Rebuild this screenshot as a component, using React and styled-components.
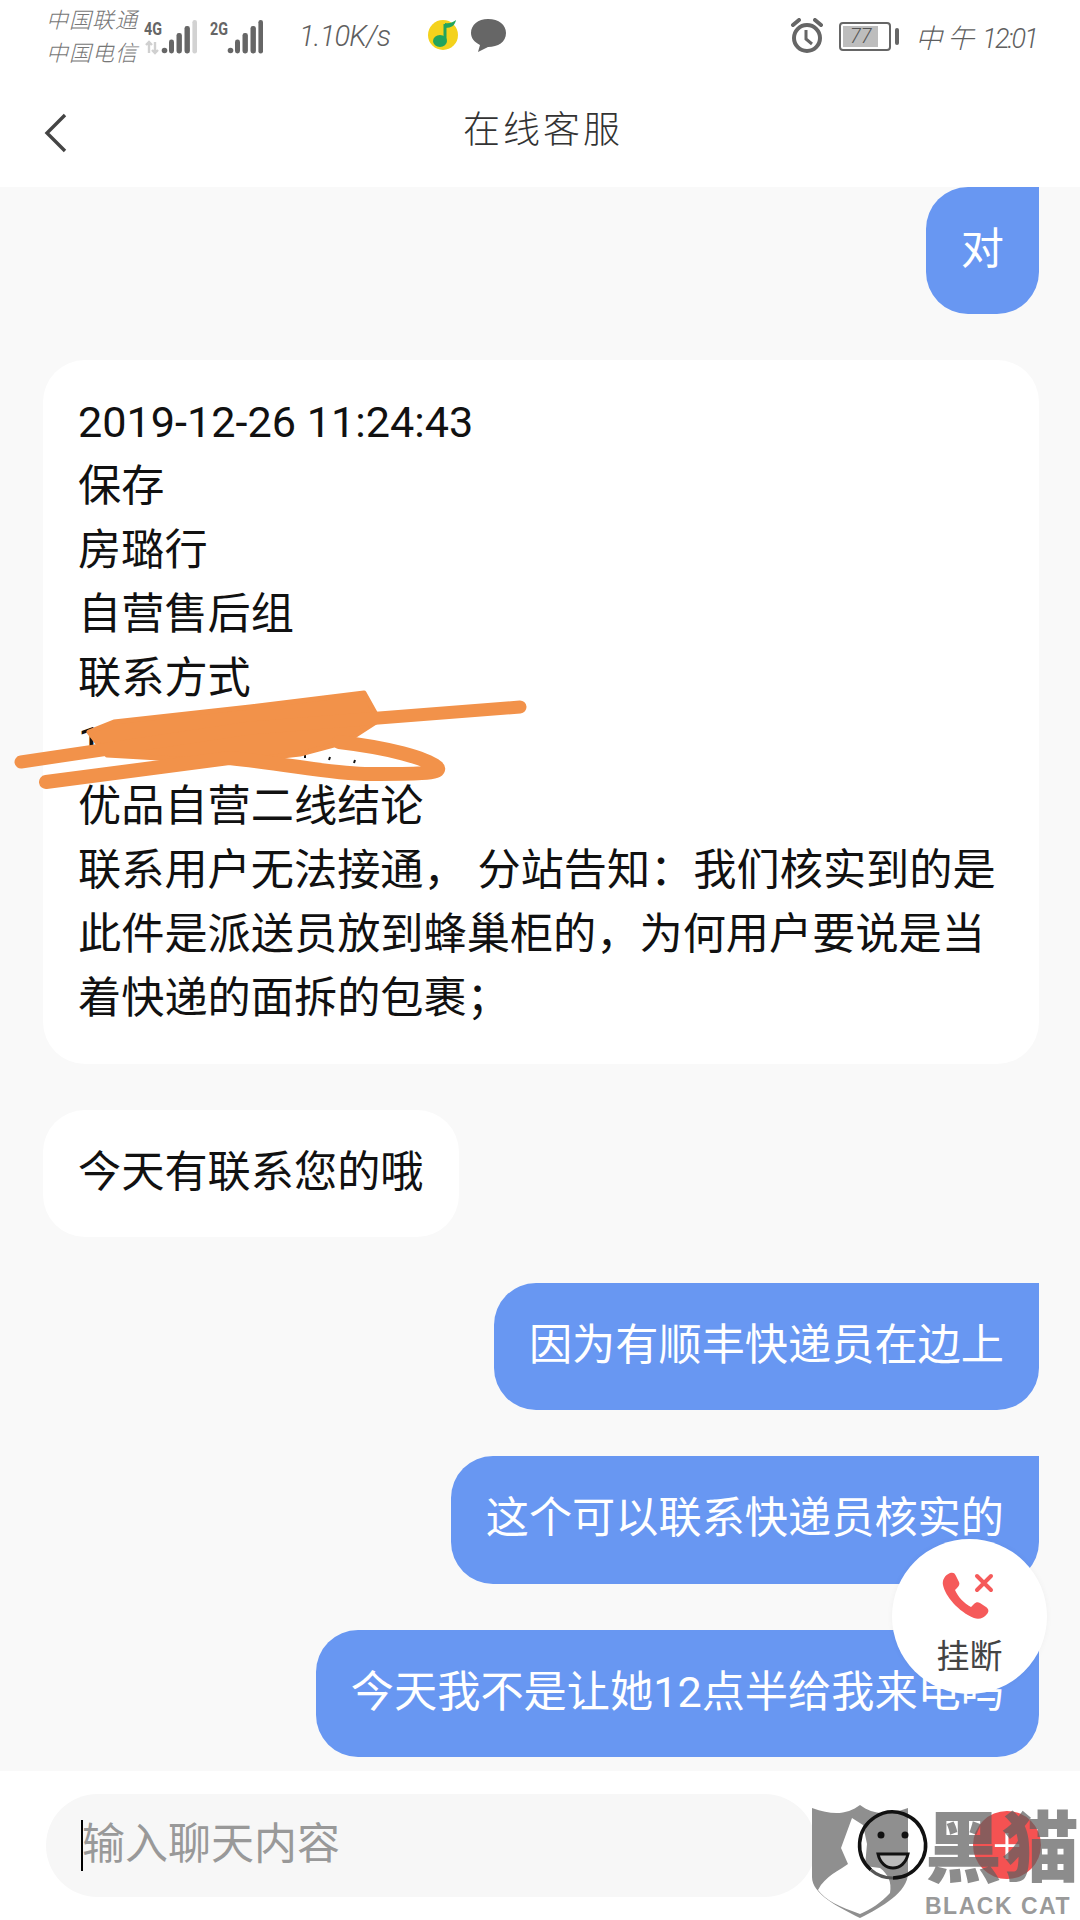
import React from 'react';
import styled, { createGlobalStyle } from 'styled-components';

const Global = createGlobalStyle`
  html, body { margin: 0; padding: 0; background: #fff; }
  * { box-sizing: border-box; }
`;

const Page = styled.div`
  position: relative;
  width: 1080px;
  height: 1920px;
  display: flex;
  flex-direction: column;
  overflow: hidden;
  background: #fff;
  font-family: Roboto, "Noto Sans CJK SC", sans-serif;
`;

const StatusBar = styled.div`
  height: 75px;
  display: flex;
  align-items: center;
  padding: 0 43px 3px 46px;
  color: #5f5f5f;
`;

const Carriers = styled.div`
  width: 98px;
  margin-top: 3px;
  display: flex;
  flex-direction: column;
  gap: 11px;
  font-size: 22px;
  line-height: 22px;
  font-weight: 300;
  font-style: italic;
  letter-spacing: 1px;
  color: #777;
  white-space: nowrap;
`;

const SignalSvg = styled.svg`
  flex: none;
  margin-right: ${p => p.$gap}px;
`;

const Speed = styled.span`
  width: 89px;
  margin-left: 36px;
  font-size: 29px;
  font-weight: 300;
  font-style: italic;
  letter-spacing: -0.8px;
  white-space: nowrap;
`;

const NotifyIcons = styled.svg`
  margin-left: 40px;
`;

const StatusRight = styled.div`
  margin-left: auto;
  display: flex;
  align-items: center;
`;

const BatteryBody = styled.div`
  width: 52px;
  height: 29px;
  margin-left: 15px;
  padding: 2px 11px 2px 2px;
  border: 2px solid #666;
  border-radius: 4px;
`;

const BatteryFill = styled.div`
  height: 100%;
  background: #bdbdbd;
  color: #555;
  font-size: 20px;
  line-height: 21px;
  font-style: italic;
  font-weight: 300;
  text-align: center;
`;

const BatteryCap = styled.div`
  width: 4px;
  height: 17px;
  margin-left: 4px;
  border-radius: 2px;
  background: #666;
`;

const Clock = styled.span`
  margin-left: 16px;
  font-size: 27px;
  font-weight: 300;
  font-style: italic;
  letter-spacing: 5px;
  white-space: nowrap;
`;

const ClockDigits = styled.span`
  margin-left: 3px;
  font-size: 27px;
  letter-spacing: -1.8px;
`;

const Header = styled.div`
  position: relative;
  height: 112px;
  display: flex;
  align-items: center;
  justify-content: center;
`;

const BackButton = styled.svg`
  position: absolute;
  left: 44px;
  top: 37px;
`;

const Title = styled.h1`
  margin: 0 0 0 6px;
  font-size: 37px;
  line-height: 40px;
  font-weight: 300;
  letter-spacing: 3px;
  color: #333;
`;

const Chat = styled.div`
  flex: 1;
  display: flex;
  flex-direction: column;
  align-items: flex-start;
  gap: 46px;
  padding: 0 41px 0 43px;
  background: #f9f9f9;
  overflow: hidden;
`;

const Bubble = styled.div`
  position: relative;
  flex: none;
  padding: 31px 35px 32.33px 35px;
  font-size: 43.2px;
  line-height: 64px;
  white-space: pre-wrap;
  border-radius: ${p => (p.$mine ? '42px 0 42px 42px' : '42px')};
  align-self: ${p => (p.$mine ? 'flex-end' : 'flex-start')};
  color: ${p => (p.$mine ? '#fff' : '#111')};
  background: ${p => (p.$mine ? '#6897f2' : '#fff')};
  width: ${p => (p.$wide ? '100%' : 'auto')};
`;

const Scribble = styled.svg`
  position: absolute;
  left: -43px;
  top: 320px;
`;

const Footer = styled.div`
  height: 149px;
  flex: none;
  padding: 23px 0 0 46px;
  background: #fff;
`;

const InputBox = styled.div`
  width: 770px;
  height: 103px;
  display: flex;
  align-items: center;
  padding-left: 35px;
  border-radius: 52px;
  background: #f7f7f7;
`;

const Caret = styled.div`
  width: 2px;
  height: 51px;
  background: #000;
`;

const Placeholder = styled.span`
  margin: 0 0 4px -1px;
  font-size: 43px;
  line-height: 50px;
  color: #999;
`;

const HangUp = styled.div`
  position: absolute;
  left: 892px;
  top: 1539px;
  width: 155px;
  height: 155px;
  display: flex;
  flex-direction: column;
  align-items: center;
  padding-top: 32px;
  border-radius: 50%;
  background: #fff;
  box-shadow: 0 0 6px rgba(0, 0, 0, 0.04);
`;

const HangUpSvg = styled.svg`
  flex: none;
  margin-left: -4px;
`;

const HangUpLabel = styled.span`
  margin-top: 18px;
  font-size: 33px;
  line-height: 36px;
  color: #444;
`;

const PlusButton = styled.div`
  position: absolute;
  left: 973px;
  top: 1811px;
  width: 68px;
  height: 68px;
  display: flex;
  align-items: center;
  justify-content: center;
  border-radius: 50%;
  background: #f55252;
  color: #fff;
  font-size: 50px;
  font-weight: 300;
`;

const Watermark = styled.div`
  position: absolute;
  left: 810px;
  top: 1804px;
  width: 270px;
  height: 116px;
`;

const CatName = styled.div`
  position: absolute;
  left: 115px;
  top: -6px;
  font-size: 77px;
  line-height: 90px;
  font-weight: 900;
  white-space: nowrap;
  color: rgba(95, 95, 95, 0.72);
  font-family: "Noto Sans CJK SC", sans-serif;
`;

const CatLatin = styled.div`
  position: absolute;
  left: 115px;
  top: 90px;
  font-size: 23px;
  line-height: 24px;
  font-weight: 900;
  letter-spacing: 1.5px;
  white-space: nowrap;
  color: #9a9a9a;
  font-family: "Liberation Sans", sans-serif;
`;

const SignalIcon = ({ label, last, arrows, gap }) => (
  <SignalSvg width="53" height="40" viewBox="0 0 53 40" $gap={gap}>
    <text x="0" y="18.5" fontSize="19" fontWeight="700" fontFamily="Roboto" fill="#666" textLength="18" lengthAdjust="spacingAndGlyphs">{label}</text>
    {arrows && <path d="M5 37V26M2 29l3-3 3 3M11 26v11M8 34l3 3 3-3" fill="none" stroke="#d0d0d0" strokeWidth="2.4" />}
    <circle cx="20.5" cy="34.5" r="2.8" fill="#666" />
    <rect x="25" y="23.5" width="5" height="14" rx="2.4" fill="#666" />
    <rect x="32.5" y="17" width="5.4" height="20.5" rx="2.4" fill="#666" />
    <rect x="40.5" y="10" width="5.4" height="27.5" rx="2.4" fill="#666" />
    <rect x="48.4" y="4" width="4.6" height="33.5" rx="2.2" fill={last} />
  </SignalSvg>
);

const HangUpIcon = () => (
  <HangUpSvg width="54" height="50" viewBox="0 0 54 50">
    <path d="M9 2c3-1 5 0 6 3l3 6c1 2 0 4-2 6l-2 2c3 7 9 13 16 17l3-3c2-2 4-2 6-1l6 4c3 2 3 5 1 7-3 4-8 6-13 4C18 41 4 25 2 14 1 9 4 4 9 2z" fill="#f55a5a" />
    <path d="M36 5l14 14M50 5L36 19" stroke="#f55a5a" strokeWidth="4" strokeLinecap="round" />
  </HangUpSvg>
);

const App = () => {
  return (
    <Page>
      <Global />
      <StatusBar>
        <Carriers>
          <span>中国联通</span>
          <span>中国电信</span>
        </Carriers>
        <SignalIcon label="4G" last="#d2d2d2" arrows gap={13} />
        <SignalIcon label="2G" last="#666" gap={0} />
        <Speed>1.10K/s</Speed>
        <NotifyIcons width="80" height="36" viewBox="0 0 80 36">
          <circle cx="15" cy="17" r="15" fill="#f4d21c" />
          <path d="M17 6v16" stroke="#22a45d" strokeWidth="3" />
          <path d="M17 5c5 1 8-1 11-3-1 5-4 8-11 8z" fill="#22a45d" />
          <ellipse cx="12" cy="23" rx="7" ry="6" fill="#22a45d" />
          <path d="M60 1C71 1 78 7 78 15C78 24 70 29 60 29L50 34L52 27C46 24 43 20 43 15C43 7 50 1 60 1Z" fill="#666" />
        </NotifyIcons>
        <StatusRight>
          <svg width="34" height="36" viewBox="0 0 34 36">
            <circle cx="17" cy="20" r="13" fill="none" stroke="#666" strokeWidth="4" />
            <path d="M16 12v9l6 5" fill="none" stroke="#666" strokeWidth="3" />
            <path d="M3 7l6-5M31 7l-6-5" stroke="#666" strokeWidth="4" strokeLinecap="round" />
          </svg>
          <BatteryBody>
            <BatteryFill>77</BatteryFill>
          </BatteryBody>
          <BatteryCap />
          <Clock>中午<ClockDigits>12:01</ClockDigits></Clock>
        </StatusRight>
      </StatusBar>
      <Header>
        <BackButton width="24" height="44" viewBox="0 0 24 44">
          <path d="M21 3L3 21l18 18" fill="none" stroke="#444" strokeWidth="3.4" />
        </BackButton>
        <Title>在线客服</Title>
      </Header>
      <Chat>
        <Bubble $mine>对</Bubble>
        <Bubble $wide>
          {'2019-12-26 11:24:43\n保存\n房璐行\n自营售后组\n联系方式\n1\n优品自营二线结论\n联系用户无法接通， 分站告知：我们核实到的是\n此件是派送员放到蜂巢柜的，为何用户要说是当\n着快递的面拆的包裹；'}
          <Scribble width="540" height="130" viewBox="0 0 540 130">
            <path d="M305 75v3M330 77l-1 3M355 80l-1 3" stroke="#111" strokeWidth="2" />
            <path d="M89 52L114 42 250 27 364 13 379 40 345 62 300 74 229 82 107 75z" fill="#f2924a" stroke="#f2924a" strokeWidth="5" strokeLinejoin="round" />
            <path d="M21 82L250 48 520 27" fill="none" stroke="#f2924a" strokeWidth="13" strokeLinecap="round" />
            <path d="M46 102L229 78C290 84 330 94 370 94C410 94 445 94 437 87C425 78 390 68 339 62" fill="none" stroke="#f2924a" strokeWidth="14" strokeLinecap="round" />
          </Scribble>
        </Bubble>
        <Bubble>今天有联系您的哦</Bubble>
        <Bubble $mine>因为有顺丰快递员在边上</Bubble>
        <Bubble $mine>这个可以联系快递员核实的</Bubble>
        <Bubble $mine>今天我不是让她12点半给我来电吗</Bubble>
      </Chat>
      <Footer>
        <InputBox>
          <Caret />
          <Placeholder>输入聊天内容</Placeholder>
        </InputBox>
      </Footer>
      <HangUp>
        <HangUpIcon />
        <HangUpLabel>挂断</HangUpLabel>
      </HangUp>
      <PlusButton>+</PlusButton>
      <Watermark>
        <svg width="270" height="116" viewBox="0 0 270 116">
          <path d="M2 4C24 12 38 10 50 1C62 10 76 12 98 4V69C98 88 72 103 50 114C28 103 2 90 2 73Z" fill="#8f8f8f" />
          <path d="M8 86C15 72 30 66 38 60L31 44L42 14L53 21L57 40L55 62L70 64C78 70 82 78 80 89C72 98 60 106 50 110C30 103 15 96 8 86Z" fill="#fff" />
          <path d="M61 66A33 33 0 1 1 83 74" fill="none" stroke="#111" strokeWidth="3.5" />
          <path d="M83 74A33 33 0 0 1 61 66" fill="none" stroke="#555" strokeWidth="3" />
          <circle cx="71" cy="31" r="3.5" fill="#111" />
          <circle cx="95" cy="31" r="3.5" fill="#111" />
          <path d="M68 50h30c-2 9-8 14-15 14s-13-5-15-14z" fill="#bbb" stroke="#111" strokeWidth="3" />
        </svg>
        <CatName>黑猫</CatName>
        <CatLatin>BLACK CAT</CatLatin>
      </Watermark>
    </Page>
  );
};

export default App;
